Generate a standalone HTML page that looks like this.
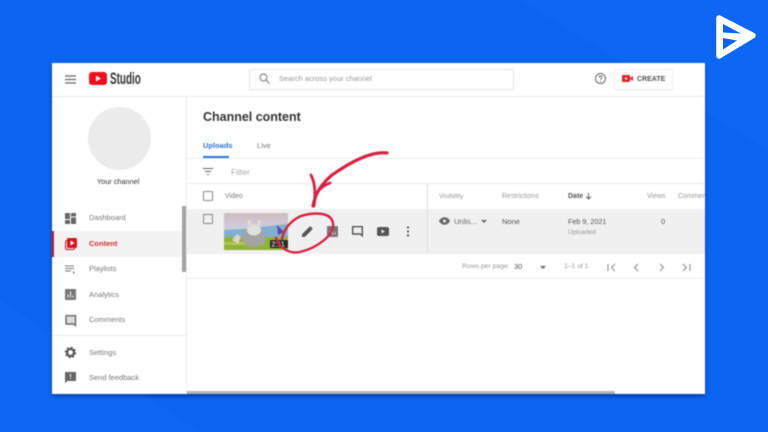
<!DOCTYPE html>
<html><head><meta charset="utf-8">
<style>
html,body{margin:0;padding:0}
body{width:768px;height:432px;overflow:hidden;background:#0a64f2;position:relative;font-family:"Liberation Sans",sans-serif}
#bg{position:absolute;left:0;top:0}
#app{position:absolute;left:52px;top:63px;width:653px;height:331px;background:#fff;overflow:hidden;box-shadow:0 2px 4px rgba(0,0,40,.45);filter:blur(.45px)}
.t{position:absolute;white-space:nowrap;line-height:10px;font-size:7.5px}
.l{position:absolute;background:#ececec}
svg{position:absolute;overflow:visible}
</style></head><body>
<svg id="bg" width="768" height="432"><path d="M0 300L200 432H0ZM768 150L520 0H768Z" fill="#0d6bf6" opacity=".5"/>
<path d="M719 18L753 35.500 719 56Z" fill="#fff" stroke="#fff" stroke-width="5.500" stroke-linejoin="round"/>
<path d="M723 24L741 33.500 723 32.500ZM723 38L737 40.500 723 49.500Z" fill="#0a64f2"/></svg>

<div id="app">
<div class="l" style="left:0;top:33px;width:653px;height:1px"></div>
<div class="l" style="left:134px;top:34px;width:1px;height:297px"></div>

<svg style="left:13px;top:12px" width="11" height="9"><path d="M0 1h11M0 4.500h11M0 8h11" stroke="#666" stroke-width="1.200"/></svg>
<svg style="left:37px;top:9px" width="18" height="13"><rect width="18" height="13" rx="3" fill="#f00f1a"/><path d="M7 3.500l5 3-5 3z" fill="#fff"/></svg>
<div class="t" style="left:58px;top:8px;font:bold 16.500px/17px 'Liberation Sans',sans-serif;color:#333;transform:scaleX(.6);transform-origin:0 0">Studio</div>

<div style="position:absolute;left:197px;top:6px;width:263px;height:19px;border:1px solid #e4e4e4;border-radius:2px"></div>
<svg style="left:207px;top:10px" width="11" height="11" fill="none" stroke="#888" stroke-width="1.200"><circle cx="4.500" cy="4.500" r="3.500"/><path d="M7 7l3.500 3.500"/></svg>
<div class="t" style="left:227px;top:11px;color:#999">Search across your channel</div>

<svg style="left:543px;top:10px" width="11" height="11" fill="none" stroke="#666"><circle cx="5.500" cy="5.500" r="5"/><path d="M4 4.500c0-2 3-2 3 0 0 1-1.500 1-1.500 2.300M5.500 8v1" stroke-width=".9"/></svg>
<div style="position:absolute;left:562px;top:6px;width:57px;height:19px;border:1px solid #ececec"></div>
<svg style="left:570px;top:12px" width="11" height="7"><rect width="8" height="7" rx="1" fill="#d9202a"/><path d="M8 3l3-2v5l-3-2z" fill="#d9202a"/><path d="M4 2v3M2.500 3.500h3" stroke="#fff" stroke-width=".8"/></svg>
<div class="t" style="left:585px;top:12px;font-weight:bold;font-size:7px;color:#555">CREATE</div>

<!-- sidebar -->
<div style="position:absolute;left:36px;top:44px;width:63px;height:63px;border-radius:50%;background:#ebebeb"></div>
<div class="t" style="left:45px;top:114px;font-size:7.300px;color:#333">Your channel</div>

<div style="position:absolute;left:0;top:168px;width:134px;height:26px;background:#f2f2f2"></div>
<div style="position:absolute;left:0;top:168px;width:2px;height:26px;background:#d3131d"></div>
<div style="position:absolute;left:130px;top:143px;width:4px;height:66px;background:#a3a3a3"></div>

<svg style="left:13px;top:150px" width="11" height="11" fill="#666"><rect width="5" height="6"/><rect y="7" width="5" height="4"/><rect x="6" width="5" height="3.500"/><rect x="6" y="4.500" width="5" height="6.500"/></svg>
<div class="t" style="left:37px;top:150px;color:#777">Dashboard</div>

<svg style="left:13px;top:175px" width="12" height="12"><rect x="0.500" y="2.500" width="9" height="9" rx="1.500" fill="none" stroke="#d3131d"/><rect x="2" y="0" width="10" height="10" rx="1.500" fill="#d3131d"/><path d="M5.500 2.500l4 2.500-4 2.500z" fill="#fff"/></svg>
<div class="t" style="left:37px;top:176px;font-weight:bold;color:#d3303a">Content</div>

<svg style="left:13px;top:202px" width="11" height="9" stroke="#777" stroke-width="1.100"><path d="M0 1h9M0 3.500h9M0 6h6"/><path d="M8 6v3l2-1.500z" fill="#777" stroke="none"/></svg>
<div class="t" style="left:37px;top:201px;color:#777">Playlists</div>

<svg style="left:13px;top:226px" width="11" height="11"><rect width="11" height="11" rx="1" fill="#777"/><path d="M3 8.500v-3M5.500 8.500v-6M8 8.500v-2" stroke="#fff"/></svg>
<div class="t" style="left:37px;top:227px;color:#777">Analytics</div>

<svg style="left:13px;top:252px" width="11" height="12"><path d="M1 .700h9.500v9.800l-2-1.500H1z" fill="#ddd" stroke="#666" stroke-width="1.400"/></svg>
<div class="t" style="left:37px;top:252px;color:#777">Comments</div>

<div class="l" style="left:0;top:272px;width:134px;height:1px"></div>

<svg style="left:13px;top:284px" width="11" height="11"><circle cx="5.500" cy="5.500" r="3.500" fill="none" stroke="#555" stroke-width="2.200"/><circle cx="5.500" cy="5.500" r="5" fill="none" stroke="#555" stroke-width="1.500" stroke-dasharray="2 1.930"/></svg>
<div class="t" style="left:37px;top:285px;color:#777">Settings</div>

<svg style="left:13px;top:309px" width="11" height="12"><path d="M0 0h11v9H2l-2 2.500z" fill="#666"/><path d="M5.500 2v3M5.500 6v1" stroke="#fff"/></svg>
<div class="t" style="left:37px;top:310px;color:#777">Send feedback</div>

<!-- main -->
<div class="t" style="left:151px;top:47px;font:bold 13px/14px 'Liberation Sans',sans-serif;color:#333;transform:scaleX(.96);transform-origin:0 0">Channel content</div>
<div class="t" style="left:151px;top:78px;font-weight:bold;color:#2f74d8">Uploads</div>
<div class="t" style="left:205px;top:78px;color:#777">Live</div>
<div style="position:absolute;left:151px;top:93px;width:26px;height:2px;background:#2f74d8"></div>
<div class="l" style="left:135px;top:95px;width:518px;height:1px"></div>

<svg style="left:151px;top:105px" width="10" height="8" stroke="#666"><path d="M0 .500h10M2 3.500h6M4 6.500h2"/></svg>
<div class="t" style="left:179px;top:104px;font-size:8.500px;color:#aaa">Filter</div>
<div class="l" style="left:135px;top:120px;width:518px;height:1px"></div>

<div style="position:absolute;left:151px;top:128px;width:8px;height:8px;border:1.200px solid #888;border-radius:1px"></div>
<div class="t" style="left:173px;top:129px;font-size:7px;color:#777">Video</div>
<div class="t" style="left:387px;top:129px;font-size:6.800px;color:#999">Visibility</div>
<div class="t" style="left:450px;top:129px;font-size:7px;color:#999">Restrictions</div>
<div class="t" style="left:516px;top:129px;font-size:7px;font-weight:bold;color:#555">Date</div>
<svg style="left:533px;top:130px" width="7" height="7" fill="none" stroke="#666"><path d="M3.500 0v6M1 3.500l2.500 2.500 2.500-2.500"/></svg>
<div class="t" style="left:595px;top:129px;font-size:7px;color:#999">Views</div>
<div class="t" style="left:626px;top:129px;font-size:7px;color:#999">Comments</div>

<!-- row -->
<div style="position:absolute;left:135px;top:146px;width:518px;height:45px;background:#f0f0f0"></div>
<div class="l" style="left:375px;top:120px;width:1px;height:71px;background:#e2e2e2"></div>
<div style="position:absolute;left:151px;top:151px;width:8px;height:8px;border:1.200px solid #888;border-radius:1px"></div>

<svg style="left:172px;top:150px" width="64" height="37">
<defs><linearGradient id="sky" x1="0" y1="0" x2="0" y2="1"><stop offset="0" stop-color="#d2bcc4"/><stop offset=".5" stop-color="#cfd0dc"/></linearGradient></defs>
<rect width="64" height="37" fill="url(#sky)"/>
<path d="M0 17l20-1 44-5v13H0z" fill="#7fb0d0"/>
<rect y="24" width="64" height="13" fill="#8fb23c"/>
<path d="M0 29h40v3H0z" fill="#b5c64c"/>
<ellipse cx="30" cy="25" rx="12" ry="9" fill="#a4a4a2"/>
<ellipse cx="30" cy="17" rx="7" ry="5.500" fill="#e2e0dc"/>
<path d="M25 14l-2-7 3 0 3 7zM33 14l1-7 3 0-1 7z" fill="#dedbd6"/>
<path d="M8 27l5-6 4 3-3 7z" fill="#d8d4cc"/>
<path d="M53 12l7 7-6 3z" fill="#5b4b9a"/>
<rect x="46" y="27" width="18" height="8" fill="#2c2c22"/>
<text x="47.500" y="33.500" font-size="7" fill="#fff" font-family="Liberation Sans">2:11</text>
</svg>

<svg style="left:250px;top:163px" width="11" height="11"><path d="M0 11V8.300L7.500.800a1 1 0 0 1 1.400 0l1.300 1.300a1 1 0 0 1 0 1.400L2.700 11z" fill="#555"/></svg>
<svg style="left:275px;top:163px" width="11" height="11"><rect width="11" height="11" rx="1" fill="#777"/><path d="M3 8.500v-3M5.500 8.500v-6M8 8.500v-2" stroke="#ddd"/></svg>
<svg style="left:300px;top:163px" width="11" height="11"><path d="M.7.700h9.600v9l-2-1.700H.7z" fill="none" stroke="#555" stroke-width="1.400"/></svg>
<svg style="left:325px;top:164px" width="12" height="9"><rect width="12" height="9" rx="2" fill="#555"/><path d="M4.500 2.500l3.500 2-3.500 2z" fill="#eee"/></svg>
<svg style="left:354px;top:163px" width="4" height="11" fill="#555"><circle cx="2" cy="1.500" r="1.100"/><circle cx="2" cy="5.500" r="1.100"/><circle cx="2" cy="9.500" r="1.100"/></svg>

<svg style="left:387px;top:154px" width="11" height="8"><path d="M0 4c2.500-5 8.500-5 11 0-2.500 5-8.500 5-11 0z" fill="#666"/><circle cx="5.500" cy="4" r="1.500" fill="#eee"/></svg>
<div class="t" style="left:402px;top:154px;color:#666">Unlis...</div>
<svg style="left:429px;top:157px" width="6" height="3"><path d="M0 0h6L3 3z" fill="#666"/></svg>
<div class="t" style="left:450px;top:154px;color:#555">None</div>
<div class="t" style="left:516px;top:154px;font-size:7.200px;color:#555">Feb 9, 2021</div>
<div class="t" style="left:516px;top:165px;font-size:6.500px;color:#999">Uploaded</div>
<div class="t" style="left:609px;top:154px;color:#555">0</div>

<div class="t" style="left:410px;top:199px;font-size:6.800px;color:#999">Rows per page:</div>
<div class="t" style="left:462px;top:199px;color:#555">30</div>
<svg style="left:488px;top:203px" width="6" height="3"><path d="M0 0h6L3 3z" fill="#666"/></svg>
<div class="t" style="left:512px;top:199px;font-size:6.800px;color:#999">1–1 of 1</div>
<svg style="left:555px;top:200px" width="90" height="9" fill="none" stroke="#888" stroke-width="1"><path d="M1 1v7M8 1L4.500 4.500 8 8M31 1l-3.500 3.500L31 8M53 1l3.500 3.500L53 8M76 1l3.500 3.500L76 8M83 1v7"/></svg>

<div class="l" style="left:135px;top:215px;width:518px;height:1px"></div>
<div style="position:absolute;left:135px;top:328px;width:428px;height:3px;background:#b4b4b4"></div>

<!-- annotation -->
<svg style="left:0;top:0" width="653" height="331" fill="none" stroke="#d8213f" stroke-linecap="round" stroke-linejoin="round">
<path d="M335 90C320 88 300 98 280 112 268 122 263 132 261 143" stroke-width="3.200"/>
<path d="M259 112C263 120 264 130 262 143M278 120C270 123 265 128 263 135" stroke-width="2.800"/>
<path d="M224 175C228 186 238 191 248 189 265 185 283 172 281 160 279 149 262 149 249 153 240 157 232 165 230 176" stroke-width="2.400"/>
</svg>
</div>
</body></html>
